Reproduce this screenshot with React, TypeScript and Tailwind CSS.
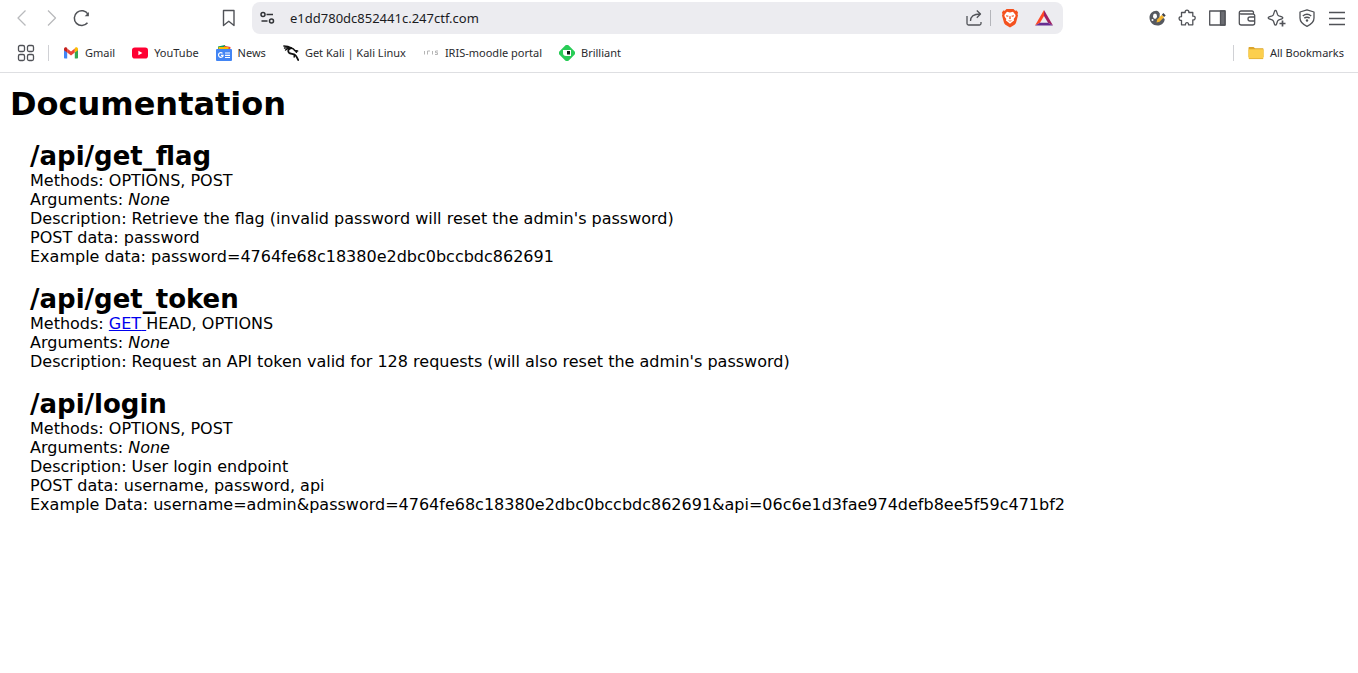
import React from "react";

interface Endpoint {
  path: string;
  lines: { label: string; value: React.ReactNode }[];
}

const bookmarks = [
  { label: "Gmail", icon: <GmailIcon /> },
  { label: "YouTube", icon: <YouTubeIcon /> },
  { label: "News", icon: <NewsIcon /> },
  { label: "Get Kali | Kali Linux", icon: <KaliIcon /> },
  { label: "IRIS-moodle portal", icon: <IrisIcon /> },
  { label: "Brilliant", icon: <BrilliantIcon /> },
];

const endpoints: Endpoint[] = [
  {
    path: "/api/get_flag",
    lines: [
      { label: "Methods", value: "OPTIONS, POST" },
      { label: "Arguments", value: <em>None</em> },
      {
        label: "Description",
        value: "Retrieve the flag (invalid password will reset the admin's password)",
      },
      { label: "POST data", value: "password" },
      { label: "Example data", value: "password=4764fe68c18380e2dbc0bccbdc862691" },
    ],
  },
  {
    path: "/api/get_token",
    lines: [
      {
        label: "Methods",
        value: (
          <>
            <a href="#get_token" className="text-[#0000ee] underline">
              GET{" "}
            </a>
            HEAD, OPTIONS
          </>
        ),
      },
      { label: "Arguments", value: <em>None</em> },
      {
        label: "Description",
        value: "Request an API token valid for 128 requests (will also reset the admin's password)",
      },
    ],
  },
  {
    path: "/api/login",
    lines: [
      { label: "Methods", value: "OPTIONS, POST" },
      { label: "Arguments", value: <em>None</em> },
      { label: "Description", value: "User login endpoint" },
      { label: "POST data", value: "username, password, api" },
      {
        label: "Example Data",
        value:
          "username=admin&password=4764fe68c18380e2dbc0bccbdc862691&api=06c6e1d3fae974defb8ee5f59c471bf2",
      },
    ],
  },
];

function GmailIcon() {
  return (
    <svg className="h-4 w-4" viewBox="0 0 16 16">
      <path d="M1 4v8.6c0 .6.4 1 1 1h2.200V7.200L1 4.600z" fill="#4285f4" />
      <path d="M15 4v8.600c0 .6-.4 1-1 1h-2.200V7.200L15 4.600z" fill="#34a853" />
      <path d="M4.200 3.600 8 6.500l3.800-2.900v3.900L8 10.500 4.200 7.500z" fill="#ea4335" />
      <path d="M1 4c0-1.500 1.700-2.200 2.800-1.300l.4.300v4.500L1 5.200z" fill="#c5221f" />
      <path d="M15 4c0-1.500-1.700-2.200-2.800-1.300l-.4.300v4.500L15 5.200z" fill="#fbbc04" />
    </svg>
  );
}

function YouTubeIcon() {
  return (
    <svg className="h-4 w-4" viewBox="0 0 16 16">
      <rect x="0" y="2.500" width="16" height="11" rx="2.800" fill="#ff0033" />
      <path d="M6.400 5.700v4.600l4-2.300z" fill="#fff" />
    </svg>
  );
}

function NewsIcon() {
  return (
    <svg className="h-4 w-4" viewBox="0 0 16 16">
      <path d="M2 1.500 9 0l1 5H2z" fill="#0c9d58" />
      <path d="M8 .8 14.500 2 14 6H8z" fill="#ea4335" />
      <path d="M2.500 2h10v4h-10z" fill="#fbbc04" />
      <rect y="4" width="16" height="12" rx="1" fill="#4285f4" />
      <path
        d="M6.500 8.400a2.300 2.300 0 1 0 .6 1.900H5M9 8h5M9 10.300h5M9 12.500h5"
        fill="none"
        stroke="#fff"
        strokeWidth="1.200"
      />
    </svg>
  );
}

function KaliIcon() {
  return (
    <svg className="h-4 w-4" viewBox="0 0 16 16" fill="none" stroke="#111" strokeLinecap="round">
      <path d="M.8 1c2.700 0 5 .3 7.500 1.800M1.500 3c2-.4 4.300-.4 6.500 0M2.500 5C4 3.800 6 3.200 8 3.200" strokeWidth="1.300" />
      <path
        d="M8.500 3.200c-3 .5-4 2.600-2.600 4.400 1.500 1.800 4.200.8 6.300 2.500 1.600 1.300 1.800 2.800 3 4.900"
        strokeWidth="1.800"
      />
      <path d="M8.500 3.200c1.800.2 2.600 1.200 3.300 2.400l2.800.5M12 5.600l1.500 1.700M11.500 9.500l-.3 2.500" strokeWidth="1.500" />
    </svg>
  );
}

function IrisIcon() {
  return (
    <svg className="h-4 w-4" viewBox="0 0 16 16" fill="none" stroke="#b5b5b5" strokeWidth="1">
      <path d="M1.500 6v3.500M4.500 9.500V6h2.500M9.500 6v3.500M15 6h-2.500v1.700H14.500V9.500H12" />
    </svg>
  );
}

function BrilliantIcon() {
  return (
    <svg className="h-4 w-4" viewBox="0 0 16 16">
      <path
        d="M6 .8a2.800 2.800 0 0 1 4 0L15.200 6a2.800 2.800 0 0 1 0 4L10 15.200a2.800 2.800 0 0 1-4 0L.8 10a2.800 2.800 0 0 1 0-4z"
        fill="#29cc57"
      />
      <path d="M4 5h8v6H7a3 3 0 0 1-3-3z" fill="#fff" />
      <rect x="8" y="6" width="3" height="3.500" fill="#0b1b10" />
    </svg>
  );
}

function FolderIcon() {
  return (
    <svg className="h-4 w-4" viewBox="0 0 16 16">
      <path d="M.5 3c0-.7.400-1 1-1h4l1.500 1.300h7.500c.6 0 1 .4 1 1V12H.5z" fill="#dca52b" />
      <rect x=".5" y="4.200" width="15" height="9.800" rx="1" fill="#fccf4d" />
      <path d="M1 13.600h14" stroke="#e0ac35" strokeWidth=".8" />
    </svg>
  );
}

function BraveIcon() {
  return (
    <svg className="h-5 w-5" viewBox="0 0 20 20">
      <path
        d="M6.500 1h7l1.700 1.700 1.600-.1 1.300 2.200-.6 1.300.5 1.500-2 7.200c-.2.800-.7 1.400-1.400 1.900L10 19.400l-4.600-2.700A3.500 3.500 0 0 1 4 14.800L2 7.600l.5-1.500-.6-1.300 1.300-2.200 1.600.1z"
        fill="#f4511e"
      />
      <path
        d="m7 3.800 3 .6 3-.6 2.600 3.200-.3 1.700-1.600 2.200.4 1.500-2 1.600L10 15.700 7.900 14l-2-1.600.4-1.500-1.600-2.200L4.400 7z"
        fill="#fff"
      />
      <path
        d="m6 7.200 2.600.6-.5 1L6.300 8.400zM14 7.200l-2.600.6.5 1 1.800-.4zM9.500 8h1l.3 2.700-.8.600-.8-.6zM7.800 12l2.200.8 2.200-.8-2.200 1.700z"
        fill="#f4511e"
      />
    </svg>
  );
}

function RewardsIcon() {
  return (
    <svg className="h-5 w-5" viewBox="0 0 20 20">
      <path d="M10 2 1 17.500l5-2.800 4-6.800z" fill="#ff4724" />
      <path d="M10 2v5.900l4 6.800 5 2.800z" fill="#9e1f63" />
      <path d="M1 17.500h18l-5-2.800H6z" fill="#662d91" />
    </svg>
  );
}

function CookieIcon() {
  return (
    <svg className="h-5 w-5" viewBox="0 0 20 20">
      <path
        d="M9.500 2.700C5.500 2.600 2.500 5.800 2.500 9.500c0 4.500 3.500 8 8 8 4 0 7-2.500 7.200-6.500L15 9l-2.500 1 .3-4.500c-.8-1.700-2-2.700-3.300-2.800z"
        fill="#565960"
      />
      <ellipse cx="8" cy="8.200" rx="2" ry="2.700" fill="#fff" />
      <circle cx="5.500" cy="12" r="1" fill="#fff" />
      <path d="m9.500 14.500.7-3 4.500-4.500 2.300 2.300-4.500 4.500z" fill="#f5b52e" />
      <path d="m14.800 6.700 1.600-1.600 2.300 2.300-1.600 1.600z" fill="#3f4248" />
    </svg>
  );
}

interface ToolButtonProps {
  label: string;
  children: React.ReactNode;
  className?: string;
}

function ToolButton({ label, children, className = "text-[#505257]" }: ToolButtonProps) {
  return (
    <button type="button" aria-label={label} className={`shrink-0 cursor-pointer ${className}`}>
      {children}
    </button>
  );
}

// Outline icons share one 20px grid
function LineIcon({ children }: { children: React.ReactNode }) {
  return (
    <svg
      className="h-5 w-5"
      viewBox="0 0 20 20"
      fill="none"
      stroke="currentColor"
      strokeWidth="1.300"
      strokeLinejoin="round"
    >
      {children}
    </svg>
  );
}

function Toolbar() {
  return (
    <div className="flex h-9 items-center">
      <div className="flex w-[252px] shrink-0 items-center gap-2.5 pr-3.5 pl-3">
        <ToolButton label="Back" className="text-[#b9babd]">
          <LineIcon>
            <path d="M13.500 2.500 6 10l7.500 7.500" />
          </LineIcon>
        </ToolButton>
        <ToolButton label="Forward" className="text-[#b9babd]">
          <LineIcon>
            <path d="M6 2.500 13.500 10 6 17.500" />
          </LineIcon>
        </ToolButton>
        <ToolButton label="Reload">
          <LineIcon>
            <path d="M15.500 14.800A7.400 7.400 0 1 1 16 6.200" strokeWidth="1.500" />
            <path d="M16.900 4v4.200h-4.200z" fill="currentColor" stroke="none" />
          </LineIcon>
        </ToolButton>
        <div className="ml-auto flex">
          <ToolButton label="Bookmark this page">
            <LineIcon>
              <path d="M5.500 2.500H16v15l-5.250-4.200L5.500 17.500z" strokeWidth="1.400" />
            </LineIcon>
          </ToolButton>
        </div>
      </div>

      {/* Address bar */}
      <form className="flex h-8 min-w-0 flex-1 items-center rounded-lg bg-[#ececf0] pr-[9px] pl-1.5">
        <ToolButton label="View site information" className="text-[#303236]">
          <LineIcon>
            <circle cx="5" cy="6.500" r="2" strokeWidth="1.500" />
            <path d="M8.500 6.500H15M3.500 13h6" strokeWidth="1.500" />
            <circle cx="13.500" cy="13" r="2" strokeWidth="1.500" />
          </LineIcon>
        </ToolButton>
        <input
          type="text"
          aria-label="Address"
          defaultValue="e1dd780dc852441c.247ctf.com"
          className="ml-3 min-w-0 flex-1 bg-transparent text-[13px] leading-5 text-[#1b1c1f] outline-none"
        />
        <ToolButton label="Share">
          <LineIcon>
            <path d="M3 8v7.500c0 1 .5 1.500 1.500 1.500h11c1 0 1.500-.5 1.500-1.500V14M6.500 13c0-4.500 3-7 9.500-7M12.800 2.500 16.500 6l-3.700 3.700" />
          </LineIcon>
        </ToolButton>
        <span className="mx-1.5 h-4 w-px bg-[#b4b5ba]" />
        <span className="ml-[3px] flex gap-3.5">
          <ToolButton label="Brave Shields">
            <BraveIcon />
          </ToolButton>
          <ToolButton label="Brave Rewards">
            <RewardsIcon />
          </ToolButton>
        </span>
      </form>

      <div className="flex w-[295px] shrink-0 items-center justify-end gap-2.5 pr-[11px]">
        <ToolButton label="Cookie editor">
          <CookieIcon />
        </ToolButton>
        <ToolButton label="Extensions">
          <LineIcon>
            <path d="M4.500 4.500h3.700c-.7-3.200 4.300-3.200 3.600 0h4V8.200c3.200-.6 3.200 4.200 0 3.600v5h-4.300c.5-2.900-3.500-2.900-3 0H4.500v-4.500c-3.200.6-3.200-4.200 0-3.600z" />
          </LineIcon>
        </ToolButton>
        <ToolButton label="Side panel">
          <LineIcon>
            <rect x="2.700" y="3" width="15.300" height="14" />
            <path d="M13.500 3H18v14h-4.500z" fill="#6b6d72" />
          </LineIcon>
        </ToolButton>
        <ToolButton label="Wallet">
          <LineIcon>
            <path d="M16.500 6V4.500c0-1-.5-1.500-1.500-1.500H4C3 3 2.300 3.700 2.300 4.700V15c0 1.200.7 2 2 2h11.400c1.200 0 2-.8 2-2V7.500c0-1-.7-1.500-1.700-1.500H4C3 6 2.300 5.500 2.300 4.700M17.700 9H13c-1.500 0-2 .8-2 2s.5 2 2 2h4.700" />
          </LineIcon>
        </ToolButton>
        <ToolButton label="Leo AI">
          <LineIcon>
            <path d="M8.500 2.500c.6 0 .8.300 1 .9l1 3c.3.800.6 1.100 1.400 1.400l3 1c1.200.4 1.200 1.600 0 2l-3 1c-.8.300-1.100.6-1.400 1.400l-1 3c-.4 1.200-1.600 1.200-2 0l-1-3c-.3-.8-.6-1.100-1.400-1.400l-3-1c-1.200-.4-1.200-1.600 0-2l3-1c.8-.3 1.100-.6 1.400-1.400l1-3c.2-.6.4-.9 1-.9z" />
            <path d="M15.500 12.500v6M12.500 15.500h6" strokeWidth="1.700" />
          </LineIcon>
        </ToolButton>
        <ToolButton label="VPN">
          <LineIcon>
            <path d="M10 1.800 17 4v6c0 4-3 6.500-7 8.300C6 16.500 3 14 3 10V4z" />
            <path d="M5.800 8c2.500-2 5.900-2 8.400 0M7.300 10.200c1.700-1.300 3.700-1.300 5.400 0" strokeWidth="1.500" />
            <circle cx="10" cy="12.500" r="1.200" fill="currentColor" stroke="none" />
          </LineIcon>
        </ToolButton>
        <ToolButton label="Menu">
          <LineIcon>
            <path d="M2 4.500h16M2 10.500h16M2 16.500h16" strokeWidth="1.400" />
          </LineIcon>
        </ToolButton>
      </div>
    </div>
  );
}

function BookmarksBar() {
  return (
    <nav className="flex h-9 items-center pr-3.5 pb-0.5 pl-4 text-[11px] whitespace-nowrap text-[#2a2b2e]">
      <ToolButton label="Tab groups">
        <LineIcon>
          <rect x="2.500" y="2.500" width="6" height="6" rx="1.500" />
          <rect x="11.500" y="2.500" width="6" height="6" rx="1.500" />
          <rect x="2.500" y="11.500" width="6" height="6" rx="1.500" />
          <rect x="11.500" y="11.500" width="6" height="6" rx="1.500" />
        </LineIcon>
      </ToolButton>
      <span className="mr-3.5 ml-3 h-4 w-px bg-[#d0d1d5]" />
      <div className="flex items-center gap-[17px]">
        {bookmarks.map((bookmark) => (
          <a key={bookmark.label} href="#bookmark" className="flex items-center gap-1.5">
            {bookmark.icon}
            {bookmark.label}
          </a>
        ))}
      </div>
      <span className="mr-3.5 ml-auto h-4 w-px bg-[#d0d1d5]" />
      <button type="button" className="flex cursor-pointer items-center gap-1.5">
        <FolderIcon />
        All Bookmarks
      </button>
    </nav>
  );
}

export default function App() {
  return (
    <div className="min-h-screen bg-white">
      <header className="border-b border-[#dedfe2] font-['Noto_Sans',sans-serif]">
        <Toolbar />
        <BookmarksBar />
      </header>

      <main className="px-2.5 pt-3 pb-8 font-[Verdana,'DejaVu_Sans',sans-serif] text-base leading-[19px] text-black">
        <h1 className="text-[32px] leading-[38px] font-bold">Documentation</h1>
        <div className="mt-[18px] space-y-[18px] pl-5">
          {endpoints.map((endpoint) => (
            <section key={endpoint.path}>
              <h2 className="text-[26px] leading-[30px] font-bold">{endpoint.path}</h2>
              {endpoint.lines.map((line) => (
                <p key={line.label}>
                  {line.label}: {line.value}
                </p>
              ))}
            </section>
          ))}
        </div>
      </main>
    </div>
  );
}
